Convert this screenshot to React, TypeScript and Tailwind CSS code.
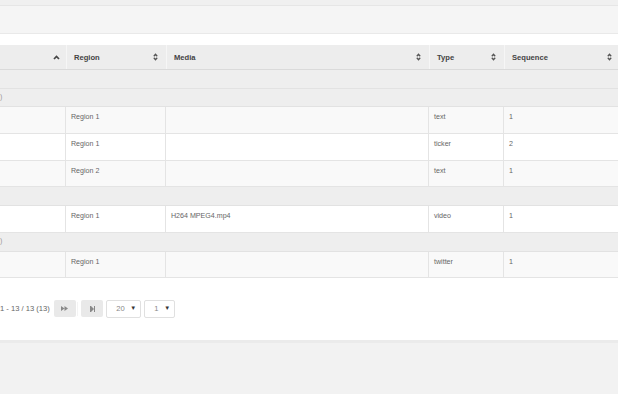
import React from "react";

type Row =
  | { kind: "group"; label: string }
  | {
      kind: "data";
      region: string;
      media: string;
      type: string;
      sequence: string;
      striped: boolean;
    };

const ROWS: Row[] = [
  { kind: "group", label: "" },
  { kind: "group", label: ")" },
  { kind: "data", region: "Region 1", media: "", type: "text", sequence: "1", striped: true },
  { kind: "data", region: "Region 1", media: "", type: "ticker", sequence: "2", striped: false },
  { kind: "data", region: "Region 2", media: "", type: "text", sequence: "1", striped: true },
  { kind: "group", label: "" },
  { kind: "data", region: "Region 1", media: "H264 MPEG4.mp4", type: "video", sequence: "1", striped: false },
  { kind: "group", label: ")" },
  { kind: "data", region: "Region 1", media: "", type: "twitter", sequence: "1", striped: true },
];

const COLS = "grid grid-cols-[66px_100px_263px_75px_117px]";

function SortIcon() {
  return (
    <svg width="5" height="8" viewBox="0 0 5 8" className="shrink-0">
      <path d="M0.8 3.2 L2.5 1.3 L4.2 3.2" fill="none" stroke="#555" strokeWidth="1.3" />
      <path d="M0.8 4.8 L2.5 6.7 L4.2 4.8" fill="none" stroke="#555" strokeWidth="1.3" />
    </svg>
  );
}

function ChevronUp() {
  return (
    <svg width="7" height="5" viewBox="0 0 7 5" className="shrink-0">
      <path d="M1 4 L3.5 1.4 L6 4" fill="none" stroke="#444" strokeWidth="1.7" />
    </svg>
  );
}

function HeaderCell({ label, last }: { label: string; last?: boolean }) {
  return (
    <div
      className={`flex items-center justify-between pt-[1px] pl-[7px] ${last ? "pr-[9px]" : "pr-[8.5px]"} border-l border-[#f6f6f6]`}
    >
      <span className="text-[7.6px] font-bold text-[#444]">{label}</span>
      <SortIcon />
    </div>
  );
}

function DataCell({ text, last }: { text: string; last?: boolean }) {
  return (
    <div
      className={`pl-[5px] pt-[5px] text-[7.1px] leading-[11px] text-[#666] ${last ? "" : "border-r border-[#e4e4e4]"}`}
    >
      {text}
    </div>
  );
}

function Pager() {
  return (
    <div className="flex items-center h-[18px] text-[7.6px] text-[#666]">
      <span className="whitespace-nowrap">1 - 13 / 13 (13)</span>
      <button className="ml-[4px] w-[22px] h-[17px] flex items-center justify-center bg-[#e9e9e9] rounded-[2px]">
        <svg width="7" height="5" viewBox="0 0 7 5">
          <path d="M0 0 L3.5 2.5 L0 5 Z M3.5 0 L7 2.5 L3.5 5 Z" fill="#888" />
        </svg>
      </button>
      <div className="mx-[1.5px] w-px h-[14px] bg-[#f4f4f4]" />
      <button className="ml-[1.5px] w-[22px] h-[17px] flex items-center justify-center bg-[#e9e9e9] rounded-[2px]">
        <svg width="5" height="6" viewBox="0 0 5 6">
          <rect x="0" y="0" width="1" height="6" fill="#888" />
          <path d="M1 0 L4 3 L1 6 Z" fill="#888" />
          <rect x="4" y="0" width="1" height="6" fill="#888" />
        </svg>
      </button>
      <div className="ml-[3px] w-[35px] h-[18px] flex items-center justify-between pl-[9px] pr-[4px] bg-white border border-[#e0e0e0] rounded-[2px] text-[#888]">
        <span>20</span>
        <span className="text-[6px] text-[#333]">▼</span>
      </div>
      <div className="ml-[3px] w-[31px] h-[18px] flex items-center justify-between pl-[9px] pr-[4px] bg-white border border-[#e0e0e0] rounded-[2px] text-[#888]">
        <span>1</span>
        <span className="text-[6px] text-[#333]">▼</span>
      </div>
    </div>
  );
}

export default function App() {
  return (
    <div className="w-[618px] h-[394px] overflow-hidden bg-[#f2f2f2] font-['Liberation_Sans',Arial,sans-serif]">
      <div className="h-[6px] bg-[#f0f0f0] border-b border-[#e6e6e6]" />
      <div className="h-[28px] bg-[#f5f5f5] border-b border-[#e9e9e9]" />
      <div className="bg-white">
        <div className="h-[10.5px]" />
        <div className={`${COLS} h-[25.5px] bg-[#ededed] border-b border-[#dadada] shadow-[0_1px_1px_rgba(0,0,0,0.04)]`}>
          <div className="flex items-center justify-end pt-[1px] pr-[6px]">
            <ChevronUp />
          </div>
          <HeaderCell label="Region" />
          <HeaderCell label="Media" />
          <HeaderCell label="Type" />
          <HeaderCell label="Sequence" last />
        </div>
        {ROWS.map((row, i) =>
          row.kind === "group" ? (
            <div
              key={i}
              className="h-[18.7px] flex items-center bg-[#eeeeee] border-b border-[#e2e2e2] text-[7px] text-[#999]"
            >
              {row.label}
            </div>
          ) : (
            <div
              key={i}
              className={`${COLS} h-[26.7px] border-b border-[#e4e4e4] ${row.striped ? "bg-[#f9f9f9]" : "bg-white"}`}
            >
              <DataCell text="" />
              <DataCell text={row.region} />
              <DataCell text={row.media} />
              <DataCell text={row.type} />
              <DataCell text={row.sequence} last />
            </div>
          ),
        )}
        <div className="pt-[21.5px] pb-[22px]">
          <Pager />
        </div>
      </div>
      <div className="h-[3px] bg-[#ebebeb]" />
    </div>
  );
}
